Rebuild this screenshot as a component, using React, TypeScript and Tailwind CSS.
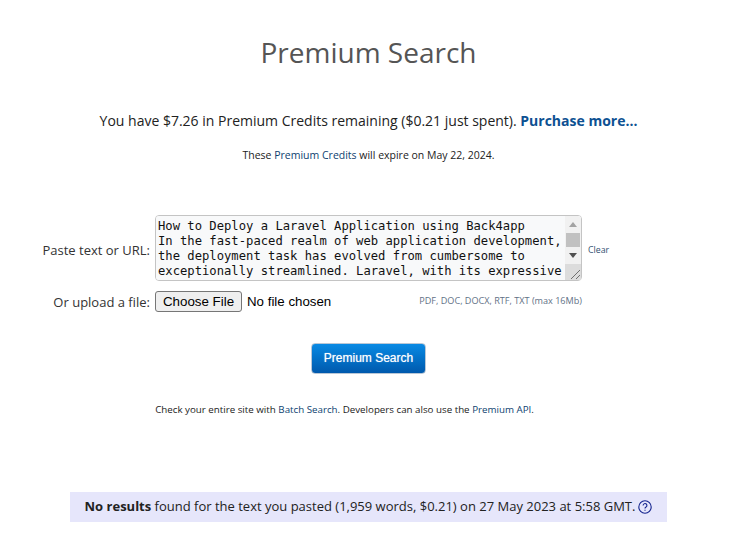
const SAMPLE = `How to Deploy a Laravel Application using Back4app
In the fast-paced realm of web application development,
the deployment task has evolved from cumbersome to
exceptionally streamlined. Laravel, with its expressive
syntax and robust tooling, has become a favourite among
developers who want to ship reliable software quickly.
Back4app makes hosting that software easier still, with
container deployment and a managed database.`;

function FakeScrollbar() {
  return (
    <div aria-hidden className="pointer-events-none absolute top-px right-px bottom-px flex w-[16px] flex-col rounded-r-[3px] bg-[#f1f1f1]">
      <div className="flex h-[17px] items-center justify-center">
        <div className="h-0 w-0 border-x-[4px] border-b-[5px] border-x-transparent border-b-[#a3a3a3]" />
      </div>
      <div className="mx-px h-[14px] bg-[#c1c1c1]" />
      <div className="flex h-[17px] items-center justify-center">
        <div className="h-0 w-0 border-x-[4px] border-t-[5px] border-x-transparent border-t-[#505050]" />
      </div>
      <div className="relative flex-1 bg-[#dcdcdc]">
        <svg className="absolute right-0 bottom-0" width="12" height="12" viewBox="0 0 12 12" stroke="#6f6f6f" strokeWidth="1">
          <path d="M2 11 11 2" />
          <path d="M7 11l4-4" />
        </svg>
      </div>
    </div>
  );
}

export default function App() {
  return (
    <div className="min-h-[538px] w-[737px] bg-white font-['Open_Sans',sans-serif] text-[#222]">
      <h1 className="pt-[33px] text-center text-[28px] leading-[38px] text-[#555]">Premium Search</h1>

      <p className="mt-[40px] text-center text-[14px] leading-5">
        You have $7.26 in Premium Credits remaining ($0.21 just spent).{" "}
        <a className="font-bold text-[#0d5192]">Purchase more...</a>
      </p>
      <p className="mt-[17px] text-center text-[10.5px] leading-[14px]">
        These <span className="text-[#0d3f70]">Premium Credits</span> will expire on May 22, 2024.
      </p>

      {/* Form */}
      <div className="mt-[53px] grid grid-cols-[150px_427px_1fr] items-center gap-x-[5px] gap-y-[9px]">
        <label className="pt-[5px] text-right text-[13px] text-[#333]">Paste text or URL:</label>
        <div className="relative h-[66px] w-[427px]">
          <textarea
            defaultValue={SAMPLE}
            className="block h-[66px] w-[427px] rounded-[4px] border border-[#c4c4c4] bg-[#f8f9fa] px-[2px] py-[3px] font-['DejaVu_Sans_Mono',monospace] text-[12.2px] leading-[15px] text-[#111]"
          />
          <FakeScrollbar />
        </div>
        <a className="pt-[5px] pl-[1px] text-[8.75px] text-[#2f4f6f]">Clear</a>

        <label className="pt-[3px] text-right text-[13px] text-[#333]">Or upload a file:</label>
        <div className="flex items-center justify-between">
          <input
            type="file"
            className="w-[200px] font-['Liberation_Sans',sans-serif] text-[13.3px] text-black file:mr-[5px] file:h-[21px] file:w-[87px] file:rounded-[3px] file:border file:border-[#767676] file:bg-[#efefef] file:text-[13.33px] file:text-black"
          />
          <span className="text-[9.1px] text-[#5f7186]">PDF, DOC, DOCX, RTF, TXT (max 16Mb)</span>
        </div>
      </div>

      <div className="mt-[30px] flex justify-center">
        <button className="h-[31px] w-[115px] rounded-[4px] border border-[#b9c7d6] bg-gradient-to-b from-[#0a8ae4] to-[#0059ad] font-['Liberation_Sans',sans-serif] text-[12px] text-white [text-shadow:0_0_1px_rgba(255,255,255,0.7)]">
          Premium Search
        </button>
      </div>

      <p className="mt-[29px] pr-[48px] text-center text-[9.75px] leading-[14px]">
        Check your entire site with <span className="text-[#0d3f70]">Batch Search</span>. Developers can also use the{" "}
        <span className="text-[#0d3f70]">Premium API</span>.
      </p>

      {/* Result bar */}
      <div className="mx-[70px] mt-[75px] flex h-[30px] w-[597px] items-center justify-center gap-[3px] bg-[#e6e6fb] text-[13px] text-[#222]">
        <span>
          <b className="font-bold">No results</b> found for the text you pasted (1,959 words, $0.21) on 27 May 2023 at 5:58 GMT.
        </span>
        <svg width="14" height="14" viewBox="0 0 14 14" fill="none" stroke="#14248f" strokeWidth="1.1">
          <circle cx="7" cy="7" r="6.2" />
          <path d="M5.1 5.5a1.9 1.9 0 1 1 2.9 1.6c-.7.4-1 .7-1 1.4" />
          <path d="M7 9.7v1.1" />
        </svg>
      </div>
    </div>
  );
}
